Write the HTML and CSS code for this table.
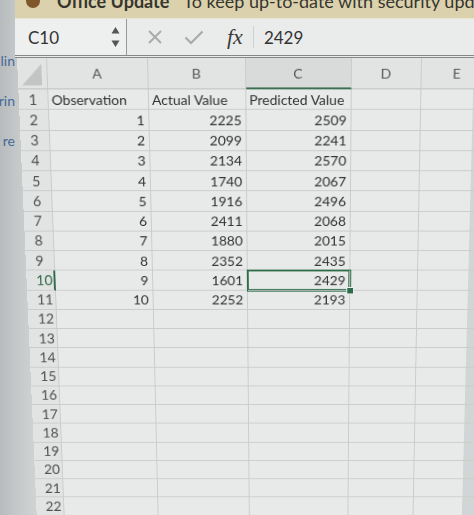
FILE: index.html
```html
<!DOCTYPE html>
<html>
<head>
<meta charset="utf-8">
<link rel="stylesheet" href="styles.css">
</head>
<body>
<div class="side">
  <div class="side-top"></div>
  <div class="lbl">lin</div>
  <div class="lbl">rin</div>
  <div class="lbl">re</div>
</div>
<div class="main">
  <div class="banner">
    <div class="banner-in"><span class="dot"></span><b class="b-title">Office Update</b><span class="b-msg">To keep up-to-date with security updates</span></div>
  </div>
  <div class="fbar">
    <div class="namebox">
      <span class="ref">C10</span>
      <svg class="spin" width="9" height="22" viewBox="0 0 9 22"><path d="M0.5 7.5 L4.5 1 L8.5 7.5 Z M0.5 14.5 L8.5 14.5 L4.5 21 Z" fill="#555"/></svg>
    </div>
    <svg class="ic-x" width="16" height="16" viewBox="0 0 16 16"><path d="M2 2 L14 14 M14 2 L2 14" stroke="#a9abaa" stroke-width="2" fill="none"/></svg>
    <svg class="ic-ok" width="20" height="15" viewBox="0 0 20 15"><path d="M1.5 7.5 L7 13 L18.5 1.5" stroke="#a9abaa" stroke-width="2.2" fill="none"/></svg>
    <span class="fx">fx</span>
    <span class="fdiv"></span>
    <span class="fval">2429</span>
  </div>
  <div class="sheet">
    <div class="c corner"><svg width="20" height="22" viewBox="0 0 20 22"><path d="M20 0 L20 22 L0 22 Z" fill="#c3c5c4"/></svg></div>
    <div class="c ch">A</div><div class="c ch">B</div><div class="c ch hsel">C</div><div class="c ch">D</div><div class="c ch">E</div>

    <div class="c rh">1</div><div class="c t">Observation</div><div class="c t">Actual Value</div><div class="c t">Predicted Value</div><div class="c"></div><div class="c"></div>
    <div class="c rh">2</div><div class="c n">1</div><div class="c n">2225</div><div class="c n">2509</div><div class="c"></div><div class="c"></div>
    <div class="c rh">3</div><div class="c n">2</div><div class="c n">2099</div><div class="c n">2241</div><div class="c"></div><div class="c"></div>
    <div class="c rh">4</div><div class="c n">3</div><div class="c n">2134</div><div class="c n">2570</div><div class="c"></div><div class="c"></div>
    <div class="c rh">5</div><div class="c n">4</div><div class="c n">1740</div><div class="c n">2067</div><div class="c"></div><div class="c"></div>
    <div class="c rh">6</div><div class="c n">5</div><div class="c n">1916</div><div class="c n">2496</div><div class="c"></div><div class="c"></div>
    <div class="c rh">7</div><div class="c n">6</div><div class="c n">2411</div><div class="c n">2068</div><div class="c"></div><div class="c"></div>
    <div class="c rh">8</div><div class="c n">7</div><div class="c n">1880</div><div class="c n">2015</div><div class="c"></div><div class="c"></div>
    <div class="c rh">9</div><div class="c n">8</div><div class="c n">2352</div><div class="c n">2435</div><div class="c"></div><div class="c"></div>
    <div class="c rh rsel">10</div><div class="c n">9</div><div class="c n">1601</div><div class="c n sel">2429</div><div class="c"></div><div class="c"></div>
    <div class="c rh">11</div><div class="c n">10</div><div class="c n">2252</div><div class="c n">2193</div><div class="c"></div><div class="c"></div>
    <div class="c rh">12</div><div class="c"></div><div class="c"></div><div class="c"></div><div class="c"></div><div class="c"></div>
    <div class="c rh">13</div><div class="c"></div><div class="c"></div><div class="c"></div><div class="c"></div><div class="c"></div>
    <div class="c rh">14</div><div class="c"></div><div class="c"></div><div class="c"></div><div class="c"></div><div class="c"></div>
    <div class="c rh">15</div><div class="c"></div><div class="c"></div><div class="c"></div><div class="c"></div><div class="c"></div>
    <div class="c rh">16</div><div class="c"></div><div class="c"></div><div class="c"></div><div class="c"></div><div class="c"></div>
    <div class="c rh">17</div><div class="c"></div><div class="c"></div><div class="c"></div><div class="c"></div><div class="c"></div>
    <div class="c rh">18</div><div class="c"></div><div class="c"></div><div class="c"></div><div class="c"></div><div class="c"></div>
    <div class="c rh">19</div><div class="c"></div><div class="c"></div><div class="c"></div><div class="c"></div><div class="c"></div>
    <div class="c rh">20</div><div class="c"></div><div class="c"></div><div class="c"></div><div class="c"></div><div class="c"></div>
    <div class="c rh">21</div><div class="c"></div><div class="c"></div><div class="c"></div><div class="c"></div><div class="c"></div>
    <div class="c rh">22</div><div class="c"></div><div class="c"></div><div class="c"></div><div class="c"></div><div class="c"></div>
    <div class="c rh">23</div><div class="c"></div><div class="c"></div><div class="c"></div><div class="c"></div><div class="c"></div>
  </div>
</div>
</body>
</html>
```

FILE: styles.css
```css
html, body {
  margin: 0;
  padding: 0;
}
body {
  width: 474px;
  height: 515px;
  overflow: hidden;
  display: flex;
  background: linear-gradient(90deg, #b7bbbd 0, #c6c9ca 18px, #d2d5d5 40px);
  font-family: Lato, "Liberation Sans", sans-serif;
}
.side {
  width: 15px;
  flex: none;
  display: flex;
  flex-direction: column;
  overflow: hidden;
}
.side-top {
  height: 53px;
  flex: none;
}
.lbl {
  height: 40px;
  flex: none;
  display: flex;
  justify-content: flex-end;
  font-size: 14px;
  line-height: 16px;
  color: #46699a;
  white-space: nowrap;
}
.main {
  flex: 1;
  min-width: 0;
  display: flex;
  flex-direction: column;
}
.banner {
  height: 18px;
  flex: none;
  background: #dbd2ad;
  border-bottom: 1px solid #e9e5d1;
  overflow: hidden;
}
.banner-in {
  display: flex;
  align-items: center;
  height: 20px;
  margin-top: -9px;
  padding-left: 11px;
  white-space: nowrap;
  font-size: 18px;
  color: #36352f;
}
.dot {
  width: 14px;
  height: 14px;
  border-radius: 50%;
  background: #80562b;
  margin-right: 17px;
  flex: none;
}
.b-title {
  font-weight: 700;
  margin-right: 14px;
}
.fbar {
  height: 36px;
  flex: none;
  display: flex;
  align-items: center;
  background: #eaeceb;
  border-bottom: 3px double #868887;
}
.namebox {
  width: 112px;
  height: 100%;
  box-sizing: border-box;
  display: flex;
  align-items: center;
  justify-content: space-between;
  padding: 0 6px 0 13px;
  background: #eef0ef;
  border-right: 1px solid #979998;
  flex: none;
}
.ref {
  font-size: 17px;
  color: #333;
}
.ic-x {
  margin-left: 20px;
  flex: none;
}
.ic-ok {
  margin-left: 21px;
  flex: none;
}
.fx {
  margin-left: 23px;
  font-family: "Liberation Serif", serif;
  font-style: italic;
  font-size: 22px;
  color: #3a3a3a;
  line-height: 1;
}
.fdiv {
  width: 1px;
  height: 22px;
  background: #cfd1d0;
  margin-left: 10px;
}
.fval {
  margin-left: 10px;
  font-size: 17px;
  color: #333;
}
.sheet {
  margin-left: 2px;
  flex: none;
  display: grid;
  grid-template-columns: 30px 101px 98px 106px 70px 72px;
  grid-template-rows: 32px;
  grid-auto-rows: 21.25px;
  background: #e8eae9;
  transform-origin: 283px 0;
  transform: perspective(1158px) rotateX(-10deg);
}
.c {
  box-sizing: border-box;
  border-right: 1px solid #c9ccca;
  border-bottom: 1px solid #c9ccca;
  display: flex;
  align-items: center;
  padding: 0 4px 0 3px;
  font-size: 14px;
  color: #2f2f2f;
  white-space: nowrap;
  overflow: hidden;
}
.n {
  justify-content: flex-end;
}
.ch {
  background: #e2e4e3;
  justify-content: center;
  color: #555;
  font-size: 14px;
  border-bottom-color: #bfc1c0;
}
.hsel {
  background: #d9dbda;
  border-bottom: 2px solid #3d7052;
}
.rh {
  background: #e2e4e3;
  color: #4f4f4f;
  font-size: 14.5px;
  padding-left: 10px;
}
.rsel {
  color: #2f6b4a;
  border-right: 2px solid #2f6b4a;
}
.corner {
  background: #e2e4e3;
  justify-content: flex-end;
  align-items: flex-end;
  padding: 0 5px 3px 0;
  border-bottom-color: #bfc1c0;
}
.corner svg {
  display: block;
}
.sel {
  position: relative;
  overflow: visible;
  box-shadow: 0 0 0 1px #2f6b4a, inset 0 0 0 1px #2f6b4a;
}
.sel::after {
  content: "";
  position: absolute;
  right: -5px;
  bottom: -5px;
  width: 6px;
  height: 6px;
  background: #2f6b4a;
  border: 1px solid #eef0ef;
}
```
